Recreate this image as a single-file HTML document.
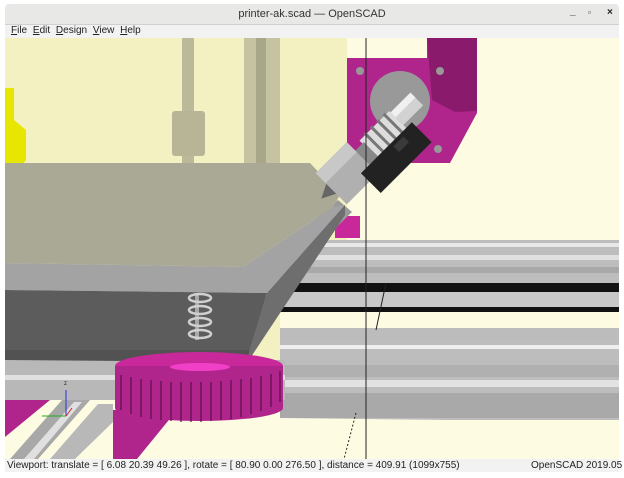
<!DOCTYPE html><html><head><style>
body{margin:0;width:624px;height:478px;background:#fff;overflow:hidden;font-family:"Liberation Sans",sans-serif}
.t{position:absolute;font-size:11px;color:#222;white-space:nowrap}
</style></head><body>
<div style="position:absolute;left:5px;top:4px;width:614px;height:20px;background:#e8e8e7;border-bottom:1px solid #d0d0d0;border-radius:4px 4px 0 0"></div>
<div class="t" style="left:0;width:624px;top:8px;text-align:center;font-size:11px;color:#333">printer-ak.scad — OpenSCAD</div>
<div class="t" style="left:570px;top:6px;font-size:10px;font-weight:bold">_</div>
<div class="t" style="left:588px;top:8px;font-size:8px;font-weight:bold">▫</div>
<div class="t" style="left:607px;top:7px;font-size:10px;font-weight:bold">×</div>
<div style="position:absolute;left:5px;top:25px;width:614px;height:13px;background:#f2f2f2"></div>
<div class="t" style="left:11px;top:25px;word-spacing:3px;font-size:10px"><u>F</u>ile <u>E</u>dit <u>D</u>esign <u>V</u>iew <u>H</u>elp</div>
<svg style="position:absolute;left:0;top:0" width="624" height="478">
<rect x="5" y="38" width="342" height="421" fill="#f3f1c2"/>
<rect x="347" y="38" width="272" height="421" fill="#fdfce3"/>
<rect x="5" y="400" width="614" height="59" fill="#fdfce3"/>
<rect x="182" y="38" width="12" height="127" fill="#bab99a"/>
<rect x="172" y="111" width="33" height="45" rx="3" fill="#b7b596"/>
<rect x="244" y="38" width="36" height="127" fill="#c5c3a2"/>
<rect x="256" y="38" width="10" height="127" fill="#a8a78a"/>
<polygon points="5,88 14,88 14,120 26,130 26,160 10,180 5,180" fill="#e6e600"/>
<polygon points="347,58 427,58 427,38 477,38 477,113 450,163 347,163" fill="#b0258c"/>
<polygon points="427,38 477,38 477,111 455,112 432,100" fill="#8a1b6c"/>
<circle cx="360" cy="71" r="4" fill="#999"/><circle cx="440" cy="71" r="4" fill="#999"/><circle cx="438" cy="149" r="4" fill="#999"/>
<circle cx="400" cy="101" r="30" fill="#999"/>
<!-- rails -->
<rect x="280" y="240" width="339" height="180" fill="#bdbdbd"/>
<rect x="280" y="243" width="339" height="4" fill="#e8e8e8"/>
<rect x="280" y="255" width="339" height="5" fill="#e0e0e0"/>
<rect x="280" y="267" width="339" height="6" fill="#a9a9a9"/>
<rect x="280" y="283" width="339" height="9" fill="#111"/>
<rect x="280" y="292" width="339" height="15" fill="#c8c8c8"/>
<rect x="280" y="307" width="339" height="5" fill="#111"/>
<rect x="280" y="312" width="339" height="16" fill="#fdfce3"/>
<rect x="280" y="330" width="339" height="10" fill="#bcbcbc"/>
<rect x="280" y="345" width="339" height="4" fill="#efefef"/>
<rect x="280" y="365" width="339" height="12" fill="#b0b0b0"/>
<rect x="280" y="380" width="339" height="7" fill="#e2e2e2"/>
<rect x="280" y="393" width="339" height="25" fill="#a9a9a9"/>
<polygon points="280,418 619,422 619,430 280,425" fill="#fdfce3"/>
<rect x="5" y="360" width="280" height="40" fill="#b8b8b8"/>
<rect x="5" y="375" width="280" height="5" fill="#e0e0e0"/>
<polygon points="5,400 50,400 5,437" fill="#b0258c"/>
<polygon points="10,459 62,400 90,400 38,459" fill="#a8a8a8"/>
<polygon points="24,459 74,402 82,402 34,459" fill="#e0e0e0"/>
<polygon points="50,459 98,404 113,404 113,422 75,459" fill="#b8b8b8"/>
<polygon points="113,410 177,410 137,459 113,459" fill="#b0258c"/>
<rect x="335" y="216" width="25" height="22" fill="#c8289a"/>
<!-- nozzle arm -->
<polygon points="338,200 352,212 305,258 285,245" fill="#9a9a9a"/>
<!-- bed -->
<polygon points="5,163 310,163 340,195 333,207 243,267 5,263" fill="#aaa996"/>
<polygon points="5,263 243,267 333,207 345,205 267,293 5,290" fill="#a3a3a3"/>
<polygon points="5,290 267,293 250,350 5,350" fill="#5c5c5c"/>
<polygon points="5,350 250,350 247,362 5,360" fill="#525252"/>
<polygon points="267,293 345,205 345,215 247,363 250,348" fill="#6e6e6e"/>
<!-- gear -->
<ellipse cx="199" cy="366" rx="84" ry="14" fill="#c8289a"/>
<rect x="115" y="366" width="168" height="42" fill="#b0258c"/>
<ellipse cx="199" cy="408" rx="84" ry="13" fill="#b0258c"/>
<ellipse cx="200" cy="367" rx="30" ry="4" fill="#f040c8"/>
<g stroke="#5a0f48" stroke-width="1.2">
<line x1="121" y1="375" x2="121" y2="410"/><line x1="131" y1="377" x2="131" y2="414"/><line x1="141" y1="379" x2="141" y2="417"/><line x1="151" y1="380" x2="151" y2="419"/><line x1="161" y1="381" x2="161" y2="420"/><line x1="171" y1="382" x2="171" y2="421"/><line x1="181" y1="382" x2="181" y2="422"/><line x1="191" y1="382" x2="191" y2="422"/><line x1="201" y1="382" x2="201" y2="422"/><line x1="211" y1="382" x2="211" y2="421"/><line x1="221" y1="381" x2="221" y2="420"/><line x1="231" y1="380" x2="231" y2="419"/><line x1="241" y1="379" x2="241" y2="417"/><line x1="251" y1="378" x2="251" y2="414"/><line x1="261" y1="376" x2="261" y2="411"/><line x1="271" y1="374" x2="271" y2="407"/><line x1="280" y1="371" x2="280" y2="402"/>
</g>
<!-- spring -->
<line x1="197" y1="293" x2="197" y2="340" stroke="#aaa" stroke-width="4"/>
<g fill="none" stroke="#d0d0d0" stroke-width="2.5"><ellipse cx="200" cy="298" rx="11" ry="4"/><ellipse cx="200" cy="310" rx="11" ry="4"/><ellipse cx="200" cy="322" rx="11" ry="4"/><ellipse cx="200" cy="334" rx="11" ry="4"/></g>
<!-- nozzle -->
<g transform="translate(368,152) rotate(45)">
<rect x="-14" y="-44" width="24" height="42" fill="#ddd"/>
<g stroke="#777" stroke-width="3"><line x1="-16" y1="-38" x2="12" y2="-38"/><line x1="-16" y1="-29" x2="12" y2="-29"/><line x1="-16" y1="-20" x2="12" y2="-20"/><line x1="-16" y1="-11" x2="12" y2="-11"/></g>
<rect x="-12" y="-72" width="18" height="28" fill="#d2d2d2"/>
<rect x="-12" y="-72" width="7" height="28" fill="#f0f0f0"/>
<rect x="-10" y="-4" width="20" height="12" fill="#888"/>
<rect x="-22" y="8" width="44" height="44" fill="#b0b0b0"/>
<rect x="-22" y="8" width="14" height="44" fill="#c8c8c8"/>
<rect x="10" y="-52" width="28" height="72" fill="#222"/>
<rect x="14" y="-36" width="8" height="14" fill="#3a3a3a"/>
<polygon points="-7,52 7,52 0,66" fill="#666"/>
</g>
<g stroke="#222" stroke-width="1"><line x1="366" y1="38" x2="366" y2="459"/><line x1="386" y1="283" x2="376" y2="330"/><line x1="356" y1="413" x2="344" y2="459" stroke-dasharray="2,2"/></g>
<g stroke-width="1"><line x1="66" y1="390" x2="66" y2="416" stroke="#2233dd"/><line x1="42" y1="416" x2="66" y2="416" stroke="#22aa22"/><line x1="66" y1="416" x2="72" y2="408" stroke="#dd2222"/></g>
</svg>
<div class="t" style="left:64px;top:381px;font-size:6px">z</div>
<div style="position:absolute;left:5px;top:459px;width:614px;height:13px;background:#f2f2f2"></div>
<div class="t" style="left:7px;top:460px;font-size:10px">Viewport: translate = [ 6.08 20.39 49.26 ], rotate = [ 80.90 0.00 276.50 ], distance = 409.91 (1099x755)</div>
<div class="t" style="left:531px;top:460px;font-size:10px">OpenSCAD 2019.05</div>
</body></html>
